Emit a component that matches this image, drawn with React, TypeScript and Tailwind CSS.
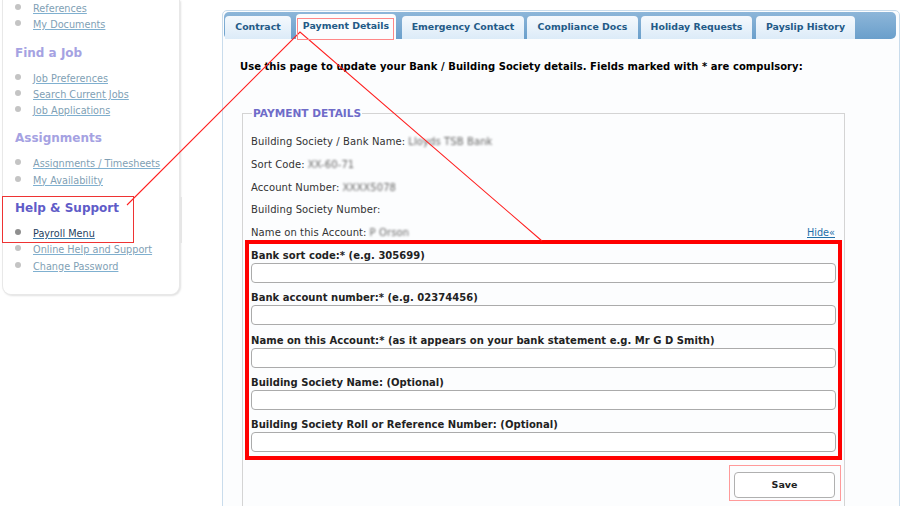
import React from 'react'

const tabs = [
  { label: 'Contract', w: 'w-[66px]' },
  { label: 'Payment Details', w: 'w-[100px] ml-[5px]', active: true },
  { label: 'Emergency Contact', w: 'w-[122px] ml-[6px]' },
  { label: 'Compliance Docs', w: 'w-[111px] ml-[3px]' },
  { label: 'Holiday Requests', w: 'w-[111px] ml-[3px]' },
  { label: 'Payslip History', w: 'w-[99px] ml-[4px]' }
]

const fields = [
  { label: 'Bank sort code:*', hint: ' (e.g. 305699)' },
  { label: 'Bank account number:*', hint: ' (e.g. 02374456)' },
  { label: 'Name on this Account:*', hint: ' (as it appears on your bank statement e.g. Mr G D Smith)' },
  { label: 'Building Society Name: (Optional)', hint: '' },
  { label: 'Building Society Roll or Reference Number: (Optional)', hint: '' }
]

function NavLink({ label, strong }: { label: string; strong?: boolean }): React.ReactElement {
  return (
    <li className="flex items-start h-[16.3px]">
      <span className={`mt-[2px] w-[6px] h-[6px] rounded-full ${strong ? 'bg-[#8f8f8f]' : 'bg-[#c4c4c4]'}`} />
      <a
        className={`ml-[12px] text-[9.7px] leading-[14px] underline ${
          strong ? 'text-[#1f3f5f] decoration-[#3a78a8]' : 'text-[#7f9fb5] decoration-[#7fb0d0]'
        }`}
      >
        {label}
      </a>
    </li>
  )
}

function Heading({ children, strong }: { children: string; strong?: boolean }): React.ReactElement {
  return (
    <h3 className={`text-[12px] leading-[16px] font-bold ${strong ? 'text-[#5f5cc8]' : 'text-[#a5a2e2]'}`}>
      {children}
    </h3>
  )
}

function Sidebar(): React.ReactElement {
  return (
    <aside className="w-[178px] h-[295px] ml-[2px] shrink-0 bg-white rounded-b-[9px] border-x border-b border-[#e8e8e8] shadow-[1px_1px_2px_rgba(0,0,0,0.12)] pl-[12px]">
      <ul className="pt-[2px]">
        <NavLink label="References" />
        <NavLink label="My Documents" />
      </ul>
      <div className="mt-[10px]">
        <Heading>Find a Job</Heading>
      </div>
      <ul className="mt-[11px]">
        <NavLink label="Job Preferences" />
        <NavLink label="Search Current Jobs" />
        <NavLink label="Job Applications" />
      </ul>
      <div className="mt-[10px]">
        <Heading>Assignments</Heading>
      </div>
      <ul className="mt-[11px]">
        <NavLink label="Assignments / Timesheets" />
        <NavLink label="My Availability" />
      </ul>
      <div className="mt-[10px]">
        <Heading strong>Help &amp; Support</Heading>
      </div>
      <ul className="mt-[11px]">
        <NavLink label="Payroll Menu" strong />
        <NavLink label="Online Help and Support" />
        <NavLink label="Change Password" />
      </ul>
    </aside>
  )
}

function Info({ label, value }: { label: string; value?: string }): React.ReactElement {
  return (
    <p className="h-[22.8px] text-[10px] leading-[14px] tracking-[0.1px] text-[#333]">
      {label}
      {value && <span className="ml-[3px] inline-block blur-[1.2px] text-[#666]">{value}</span>}
    </p>
  )
}

export default function App(): React.ReactElement {
  return (
    <div
      className="relative flex w-[900px] h-[506px] overflow-hidden bg-white"
      style={{ fontFamily: '"DejaVu Sans", Verdana, sans-serif' }}
    >
      <Sidebar />

      <main className="ml-[42px] mt-[10px] w-[678px] h-[520px] shrink-0 rounded-[5px] border border-[#c9dcec] bg-[#fcfdfe] pl-[1px] pt-[1px]">
        <nav className="flex items-end w-[672px] h-[27px] rounded-[5px] bg-gradient-to-b from-[#8db6d9] to-[#6a9fcb] pl-[1px]">
          {tabs.map(t => (
            <div
              key={t.label}
              className={`flex items-center justify-center rounded-t-[4px] text-[9.4px] font-bold text-[#235a87] ${t.w} ${
                t.active ? 'h-[25px] bg-[#fcfdfe]' : 'h-[23px] bg-gradient-to-b from-[#f5f9fd] to-[#dcebf8]'
              }`}
            >
              {t.label}
            </div>
          ))}
        </nav>

        <p className="mt-[21px] ml-[16px] text-[10px] leading-[14px] tracking-[0.05px] font-bold text-black">
          Use this page to update your Bank / Building Society details. Fields marked with * are compulsory:
        </p>

        <fieldset className="mt-[32px] ml-[18px] w-[603px] border border-[#d4d4d4] pl-[2px] pr-[2px] pb-[20px]">
          <legend className="ml-[7px] px-[1px] text-[10.6px] leading-[14px] font-bold text-[#6f6cc9]">
            PAYMENT DETAILS
          </legend>
          <div className="pl-[6px] pt-[15px]">
            <Info label="Building Society / Bank Name:" value="Lloyds TSB Bank" />
            <Info label="Sort Code:" value="XX-60-71" />
            <Info label="Account Number:" value="XXXX5078" />
            <Info label="Building Society Number:" />
            <div className="flex justify-between pr-[7px]">
              <Info label="Name on this Account:" value="P Orson" />
              <a className="text-[9.7px] leading-[14px] text-[#1f6fa8] underline">Hide«</a>
            </div>
          </div>

          <div className="-mt-[9px] w-[597px] h-[220px] border-[4px] border-[#ff0000] pl-[2px] pr-[1px] pt-[5px]">
            {fields.map(f => (
              <div key={f.label} className="h-[42.3px]">
                <label className="block text-[10px] leading-[14px] tracking-[0.03px] font-bold text-[#222]">
                  {f.label}
                  {f.hint}
                </label>
                <input
                  type="text"
                  className="block w-[585px] h-[20px] rounded-[4px] border border-[#ababab] bg-white"
                />
              </div>
            ))}
          </div>

          <div className="flex justify-end mt-[5px] mr-[1px]">
            <div className="w-[112px] h-[36px] border border-[#ff9a9a] pt-[5px] pl-[4px]">
              <button className="w-[101px] h-[26px] rounded-[4px] border border-[#b0b0b0] bg-white text-[9.5px] font-bold text-[#222]">
                Save
              </button>
            </div>
          </div>
        </fieldset>
      </main>

      {/* callout annotations drawn over the page */}
      <svg className="absolute left-0 top-0 w-[900px] h-[506px] pointer-events-none" viewBox="0 0 900 506">
        <path d="M127 205L300 32L542 241" fill="none" stroke="#ff2020" strokeWidth="1.1" />
      </svg>
      <div className="absolute left-[2px] top-[196px] w-[132px] h-[47px] border border-[#e33]" />
      <div className="absolute left-[180px] top-[197px] w-[2px] h-[46px] bg-[#e6e6e6]" />
      <div className="absolute left-[297px] top-[18px] w-[97px] h-[22px] border border-[#f88]" />
    </div>
  )
}
